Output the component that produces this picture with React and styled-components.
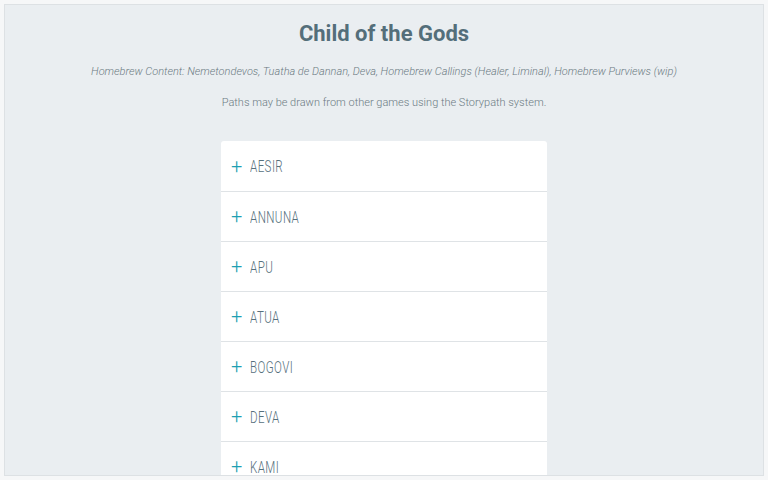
import React from "react";
import styled, { createGlobalStyle } from "styled-components";

const paths = ["AESIR", "ANNUNA", "APU", "ATUA", "BOGOVI", "DEVA", "KAMI"];

const GlobalStyle = createGlobalStyle`
  html, body {
    margin: 0;
    padding: 0;
    background: #f6f7f8;
    font-family: Roboto, "Liberation Sans", sans-serif;
  }
`;

const Page = styled.div`
  padding: 4px;
  height: 480px;
  box-sizing: border-box;
`;

const Panel = styled.div`
  height: 472px;
  box-sizing: border-box;
  background: #eaeef1;
  border: 1px solid #dde1e4;
  overflow: hidden;
  display: flex;
  flex-direction: column;
  align-items: center;
`;

const Title = styled.h1`
  margin: 16px 0 0 0;
  font-size: 22px;
  font-weight: 700;
  color: #546e7a;
  line-height: 26px;
`;

const Subtitle = styled.p`
  margin: 18px 0 0 0;
  font-size: 11px;
  font-style: italic;
  font-weight: 300;
  color: #6c7b83;
  line-height: 14px;
`;

const Note = styled.p`
  margin: 17px 0 0 0;
  font-size: 11px;
  font-weight: 300;
  color: #6c7b83;
  line-height: 14px;
`;

const List = styled.div`
  margin-top: 31px;
  width: 326px;
  background: #fff;
  border-radius: 3px;
  flex-shrink: 0;
`;

const Item = styled.div`
  height: 50px;
  box-sizing: border-box;
  display: flex;
  align-items: center;
  padding-left: 10px;
  border-top: ${(p) => (p.$first ? "none" : "1px solid #dfe3e6")};
`;

const Plus = styled.span`
  display: inline-block;
  width: 19px;
  font-family: Roboto, "Liberation Sans", sans-serif;
  font-size: 20px;
  font-weight: 300;
  line-height: 20px;
  color: #1f9fb3;
  margin-top: -1px;
`;

const Label = styled.span`
  display: inline-block;
  font-family: Roboto, "Liberation Sans", sans-serif;
  font-weight: 300;
  font-size: 17px;
  color: #56707c;
  transform: scaleX(0.68);
  transform-origin: left center;
  letter-spacing: 0.6px;
`;

export default function App() {
  return (
    <>
      <GlobalStyle />
      <Page>
        <Panel>
          <Title>Child of the Gods</Title>
          <Subtitle>
            Homebrew Content: Nemetondevos, Tuatha de Dannan, Deva, Homebrew Callings (Healer, Liminal), Homebrew Purviews (wip)
          </Subtitle>
          <Note>Paths may be drawn from other games using the Storypath system.</Note>
          <List>
            {paths.map((name, i) => (
              <Item key={name} $first={i === 0}>
                <Plus>+</Plus>
                <Label>{name}</Label>
              </Item>
            ))}
          </List>
        </Panel>
      </Page>
    </>
  );
}
